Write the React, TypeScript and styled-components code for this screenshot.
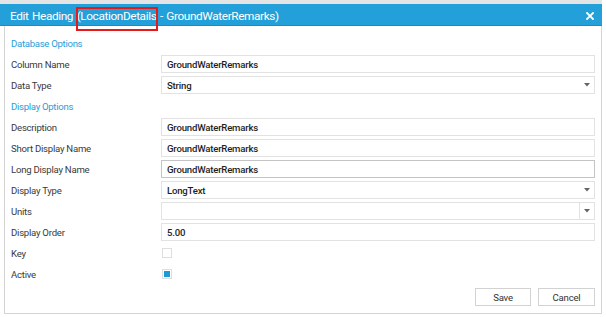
import React from "react";
import styled, { createGlobalStyle } from "styled-components";

const GlobalStyle = createGlobalStyle`
  html, body { margin: 0; padding: 0; background: #ffffff; }
  body { font-family: Roboto, "Open Sans", sans-serif; color: #333; }
`;

const Frame = styled.div`
  position: relative;
  width: 602px;
  border-top: 4px solid #e4e4e4;
`;

const TitleBar = styled.div`
  height: 21px;
  background: #239fd9;
  border-bottom: 1px solid #1a8cc4;
  display: flex;
  align-items: center;
  justify-content: space-between;
  padding: 0 8px 0 10px;
  color: #fff;
`;

const Title = styled.div`
  font-size: 11.8px;
  letter-spacing: -0.38px;
  word-spacing: 1px;
  white-space: nowrap;
  padding-top: 2px;
`;

const CloseButton = styled.div`
  width: 8px;
  height: 8px;
  padding-top: 2px;
  display: flex;
  align-items: center;
  justify-content: center;
`;

const Annotation = styled.div`
  position: absolute;
  left: 76px;
  top: 3px;
  width: 78px;
  height: 20px;
  border: 2px solid #e41b1b;
  pointer-events: none;
`;

const Body = styled.div`
  margin-left: 4px;
  border-left: 1px solid #d4d4d4;
  border-right: 1px solid #d4d4d4;
  border-bottom: 1px solid #d4d4d4;
  padding: 8px 6px 7px 6px;
`;

const FormGrid = styled.div`
  display: grid;
  grid-template-columns: 150px 1fr;
  grid-auto-rows: 18px;
  row-gap: 3px;
  align-items: center;
`;

const Section = styled.div`
  grid-column: 1 / -1;
  color: #27a0d9;
  font-size: 9.6px;
  letter-spacing: -0.3px;
`;

const Label = styled.div`
  font-size: 9.6px;
  letter-spacing: -0.25px;
  color: #3a3a3a;
`;

const Field = styled.div<{ $strong?: boolean }>`
  height: 18px;
  box-sizing: border-box;
  border: 1px solid ${(p) => (p.$strong ? "#c4c4c4" : "#e2e2e2")};
  background: #fff;
  display: flex;
  align-items: center;
  font-size: 9.6px;
  letter-spacing: -0.2px;
  font-weight: 500;
  color: #1e1e1e;
`;

const FieldText = styled.div`
  flex: 1;
  padding-left: 5px;
  white-space: nowrap;
`;

const Arrow = styled.div<{ $split?: boolean }>`
  width: 13px;
  height: 100%;
  display: flex;
  align-items: center;
  justify-content: center;
  border-left: ${(p) => (p.$split ? "1px solid #e2e2e2" : "none")};
  margin-right: 1px;
`;

const CheckBox = styled.div<{ $checked?: boolean }>`
  width: 10px;
  height: 10px;
  box-sizing: border-box;
  border: 1px solid #dedede;
  margin-left: 1px;
  display: flex;
  align-items: center;
  justify-content: center;
  &::after {
    content: "";
    display: ${(p) => (p.$checked ? "block" : "none")};
    width: 6px;
    height: 6px;
    background: #1b9ad8;
  }
`;

const Footer = styled.div`
  display: flex;
  justify-content: flex-end;
  gap: 7px;
  margin-top: 5px;
`;

const Button = styled.div<{ $w: number }>`
  width: ${(p) => p.$w}px;
  height: 18px;
  box-sizing: border-box;
  border: 1px solid #d2d2d2;
  background: #fff;
  display: flex;
  align-items: center;
  justify-content: center;
  font-size: 9.6px;
  letter-spacing: -0.2px;
  color: #333;
`;

const DownArrow = () => (
  <svg width="6" height="4" viewBox="0 0 6 4">
    <path d="M0 0 L6 0 L3 3.5 Z" fill="#666" />
  </svg>
);

type Row =
  | { kind: "section"; text: string }
  | { kind: "input"; label: string; value: string; strong?: boolean }
  | { kind: "select"; label: string; value: string; split?: boolean }
  | { kind: "check"; label: string; checked: boolean };

const rows: Row[] = [
  { kind: "section", text: "Database Options" },
  { kind: "input", label: "Column Name", value: "GroundWaterRemarks" },
  { kind: "select", label: "Data Type", value: "String" },
  { kind: "section", text: "Display Options" },
  { kind: "input", label: "Description", value: "GroundWaterRemarks" },
  { kind: "input", label: "Short Display Name", value: "GroundWaterRemarks" },
  { kind: "input", label: "Long Display Name", value: "GroundWaterRemarks", strong: true },
  { kind: "select", label: "Display Type", value: "LongText" },
  { kind: "select", label: "Units", value: "", split: true },
  { kind: "input", label: "Display Order", value: "5.00" },
  { kind: "check", label: "Key", checked: false },
  { kind: "check", label: "Active", checked: true },
];

export default function App() {
  return (
    <>
      <GlobalStyle />
      <Frame>
        <TitleBar>
          <Title>Edit Heading (LocationDetails - GroundWaterRemarks)</Title>
          <CloseButton>
            <svg width="8" height="8" viewBox="0 0 8 8">
              <path d="M1 1 L7 7 M7 1 L1 7" stroke="#fff" strokeWidth="1.8" strokeLinecap="square" />
            </svg>
          </CloseButton>
        </TitleBar>
        <Annotation />
        <Body>
          <FormGrid>
            {rows.map((r, i) => {
              if (r.kind === "section") return <Section key={i}>{r.text}</Section>;
              return (
                <React.Fragment key={i}>
                  <Label>{r.label}</Label>
                  {r.kind === "input" && (
                    <Field $strong={r.strong}>
                      <FieldText>{r.value}</FieldText>
                    </Field>
                  )}
                  {r.kind === "select" && (
                    <Field>
                      <FieldText>{r.value}</FieldText>
                      <Arrow $split={r.split}>
                        <DownArrow />
                      </Arrow>
                    </Field>
                  )}
                  {r.kind === "check" && <CheckBox $checked={r.checked} />}
                </React.Fragment>
              );
            })}
          </FormGrid>
          <Footer>
            <Button $w={56}>Save</Button>
            <Button $w={57}>Cancel</Button>
          </Footer>
        </Body>
      </Frame>
    </>
  );
}
